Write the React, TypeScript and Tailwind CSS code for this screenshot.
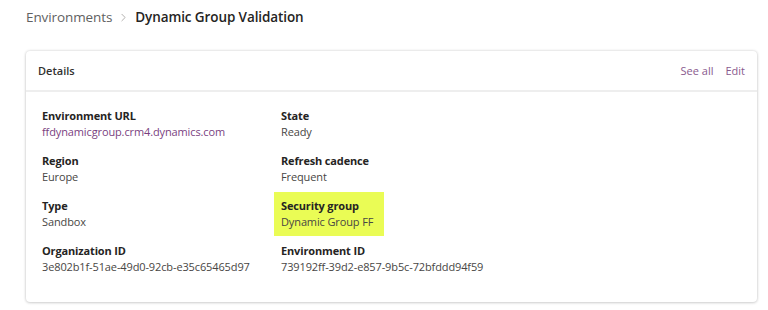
import { ChevronRight } from "lucide-react";

const left = [
  { label: "Environment URL", value: "ffdynamicgroup.crm4.dynamics.com", link: true },
  { label: "Region", value: "Europe" },
  { label: "Type", value: "Sandbox" },
  { label: "Organization ID", value: "3e802b1f-51ae-49d0-92cb-e35c65465d97" },
];

const right = [
  { label: "State", value: "Ready" },
  { label: "Refresh cadence", value: "Frequent" },
  { label: "Security group", value: "Dynamic Group FF", highlight: true },
  { label: "Environment ID", value: "739192ff-39d2-e857-9b5c-72bfddd94f59" },
];

type Item = { label: string; value: string; link?: boolean; highlight?: boolean };

function Field({ item }: { item: Item }) {
  return (
    <div
      className={
        item.highlight
          ? "-ml-[7px] -my-[6px] w-[110px] bg-[#eafc55] py-[6px] pl-[7px]"
          : "whitespace-nowrap"
      }
    >
      <div className="text-[11px] font-bold leading-[16px] tracking-[-0.15px] text-[#252423]">
        {item.label}
      </div>
      <div
        className={
          "text-[11px] leading-[16px] tracking-[-0.12px] " +
          (item.link ? "text-[#7a3f7f]" : "text-[#484644]")
        }
      >
        {item.value}
      </div>
    </div>
  );
}

export default function App() {
  return (
    <div
      className="h-[310px] w-[768px] bg-white"
      style={{ fontFamily: '"Open Sans", "Noto Sans", sans-serif' }}
    >
      {/* Breadcrumb */}
      <div className="flex items-center pl-[26px] pt-[5px] text-[13.5px] leading-[24px] tracking-[-0.1px]">
        <span className="text-[#616161]">Environments</span>
        <ChevronRight className="mx-[5px] h-[13px] w-[13px] text-[#a19f9d]" strokeWidth={1.5} />
        <span className="font-semibold text-[#252423]">Dynamic Group Validation</span>
      </div>

      {/* Details card */}
      <div className="ml-[26px] mt-[22px] h-[251px] w-[731px] rounded-[4px] bg-white shadow-[0_0_3px_rgba(0,0,0,0.18),0_1px_3px_rgba(0,0,0,0.12)]">
        <div className="flex h-[41px] items-center justify-between border-b-2 border-[#eeeeee] px-[12px] pt-[2px]">
          <span className="text-[11px] font-semibold text-[#323130]">Details</span>
          <div className="flex gap-[12px] text-[11px] text-[#8a5a8e]">
            <span>See all</span>
            <span>Edit</span>
          </div>
        </div>
        <div className="grid grid-cols-[239px_1fr] pl-[16px] pt-[16px]">
          <div className="flex flex-col gap-[13px]">
            {left.map((it) => (
              <Field key={it.label} item={it} />
            ))}
          </div>
          <div className="flex flex-col gap-[13px]">
            {right.map((it) => (
              <Field key={it.label} item={it} />
            ))}
          </div>
        </div>
      </div>
    </div>
  );
}
